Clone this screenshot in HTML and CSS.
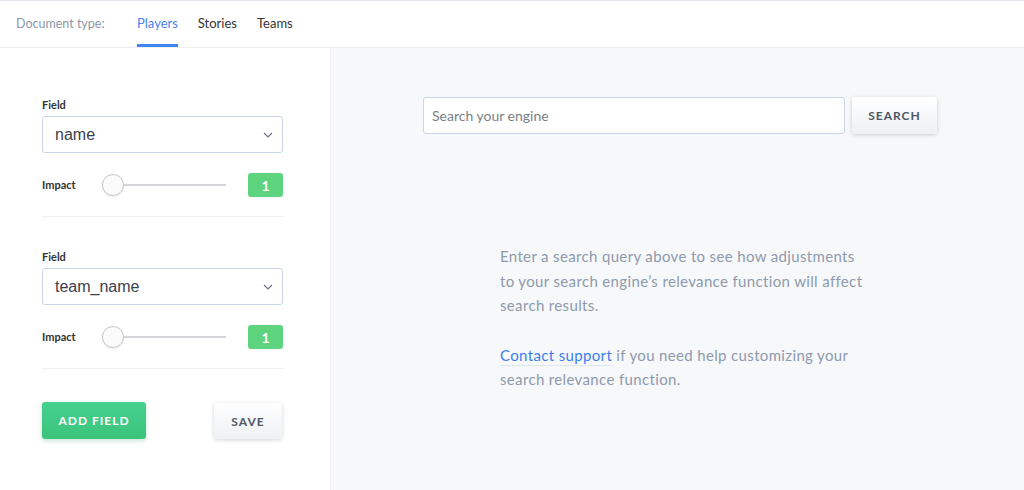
FILE: index.html
```html
<!DOCTYPE html>
<html lang="en">
<head>
<meta charset="utf-8">
<title>Relevance tuning</title>
<link rel="stylesheet" href="styles.css">
</head>
<body>
<header class="topbar">
  <span class="doc-label">Document type:</span>
  <nav class="tabs">
    <a class="tab active">Players</a>
    <a class="tab">Stories</a>
    <a class="tab">Teams</a>
  </nav>
</header>
<div class="layout">
  <aside class="sidebar">
    <section class="field-block">
      <div class="label">Field</div>
      <div class="select"><span>name</span>
        <svg class="chev" width="10" height="6" viewBox="0 0 10 6"><path d="M1 1l4 4 4-4" fill="none" stroke="#6b7380" stroke-width="1.2"/></svg>
      </div>
      <div class="impact-row">
        <span class="label">Impact</span>
        <div class="slider"><span class="track"></span><span class="knob"></span></div>
        <span class="badge">1</span>
      </div>
    </section>
    <section class="field-block">
      <div class="label">Field</div>
      <div class="select"><span>team_name</span>
        <svg class="chev" width="10" height="6" viewBox="0 0 10 6"><path d="M1 1l4 4 4-4" fill="none" stroke="#6b7380" stroke-width="1.2"/></svg>
      </div>
      <div class="impact-row">
        <span class="label">Impact</span>
        <div class="slider"><span class="track"></span><span class="knob"></span></div>
        <span class="badge">1</span>
      </div>
    </section>
    <div class="actions">
      <button class="btn btn-green">ADD FIELD</button>
      <button class="btn btn-light btn-save">SAVE</button>
    </div>
  </aside>
  <main class="main">
    <div class="search-row">
      <input class="search-input" type="text" placeholder="Search your engine">
      <button class="btn btn-light btn-search">SEARCH</button>
    </div>
    <div class="info">
      <p>Enter a search query above to see how adjustments to your search engine’s relevance function will affect search results.</p>
      <p><a class="link">Contact support</a> if you need help customizing your search relevance function.</p>
    </div>
  </main>
</div>
</body>
</html>
```

FILE: styles.css
```css
* { box-sizing: border-box; }
html, body { margin: 0; padding: 0; height: 100%; }
body {
  font-family: Lato, "Open Sans", sans-serif;
  background: #f7f8fa;
  color: #333;
  overflow: hidden;
}
.topbar {
  height: 48px;
  background: #fff;
  border-top: 1px solid #e3e7ee;
  border-bottom: 1px solid #edeff3;
  display: flex;
  align-items: stretch;
  padding-left: 16px;
}
.doc-label {
  font-size: 12.5px;
  color: #8c97a8;
  display: flex;
  align-items: center;
  padding-bottom: 1px;
  width: 121px;
}
.tabs { display: flex; gap: 20px; }
.tab {
  font-size: 13px;
  color: #333;
  display: flex;
  align-items: center;
  padding-top: 1px;
  border-bottom: 3px solid transparent;
}
.tab.active { color: #4a80f0; border-bottom-color: #3c87f0; }
.layout { display: flex; height: calc(100% - 48px); }
.sidebar {
  width: 331px;
  flex: none;
  background: #fff;
  border-right: 1px solid #edeff3;
  padding: 17px 47px 0 42px;
}
.field-block {
  padding: 33px 0 19px;
  border-bottom: 1px solid #eef0f5;
}
.label {
  font-size: 11px;
  font-weight: 700;
  color: #333;
  line-height: 14px;
}
.field-block > .label { margin-bottom: 4px; }
.select {
  height: 37px;
  border: 1px solid #c8d5e6;
  border-radius: 3px;
  display: flex;
  align-items: center;
  justify-content: space-between;
  padding: 0 9px 0 12px;
  font-family: "Liberation Sans", Arial, sans-serif;
  font-size: 16px;
  color: #3a414c;
}
.chev { margin-top: 1px; }
.impact-row {
  margin-top: 20px;
  height: 24px;
  display: flex;
  align-items: center;
}
.impact-row .label { width: 60px; }
.slider {
  position: relative;
  width: 124px;
  height: 22px;
}
.track {
  position: absolute;
  left: 10px; right: 0; top: 10px;
  height: 2px;
  background: #d4d6da;
}
.knob {
  position: absolute;
  left: 0; top: 0;
  width: 22px; height: 22px;
  border-radius: 50%;
  background: #fbfbfc;
  border: 1px solid #c4c7cc;
  box-shadow: 0 1px 2px rgba(0,0,0,0.08);
}
.badge {
  margin-left: auto;
  width: 35px;
  height: 24px;
  border-radius: 3px;
  background: #5fd47e;
  color: #fff;
  font-weight: 700;
  font-size: 14px;
  display: flex;
  align-items: center;
  justify-content: center;
}
.actions {
  padding-top: 33px;
  display: flex;
  justify-content: space-between;
  align-items: flex-start;
}
.btn {
  font-family: Lato, "Open Sans", sans-serif;
  font-weight: 700;
  font-size: 12px;
  letter-spacing: 1px;
  border: none;
  border-radius: 3px;
  height: 37px;
  cursor: pointer;
}
.btn-green {
  width: 104px;
  color: #fff;
  background: linear-gradient(#46d190, #3bc37a);
  box-shadow: 0 2px 4px rgba(40,160,100,0.25);
}
.btn-light {
  color: #4d5766;
  background: linear-gradient(#ffffff, #eef0f4);
  box-shadow: 0 1px 4px rgba(0,0,0,0.18);
}
.btn-save { width: 68px; height: 36px; margin-top: 1px; margin-right: 1px; }
.main {
  flex: 1;
  padding-top: 49px;
  display: flex;
  flex-direction: column;
  align-items: center;
}
.search-row {
  display: flex;
  gap: 7px;
  width: 514px;
  margin-left: 5px;
}
.search-input {
  width: 422px;
  height: 37px;
  border: 1px solid #c8d5e6;
  border-radius: 3px;
  background: #fff;
  padding: 0 8px;
  font-family: Lato, "Open Sans", sans-serif;
  font-size: 14px;
  color: #333;
  outline: none;
}
.search-input::placeholder { color: #7a7f87; }
.btn-search { width: 85px; }
.info {
  width: 364px;
  margin-top: 110px;
  margin-left: 9px;
  font-size: 15px;
  letter-spacing: 0.35px;
  line-height: 24.5px;
  color: #8e9aac;
}
.info p { margin: 0 0 25px; }
.link {
  color: #3b7ef0;
  text-decoration: underline;
  text-decoration-color: #dfe5ee;
  text-underline-offset: 4px;
}
```
